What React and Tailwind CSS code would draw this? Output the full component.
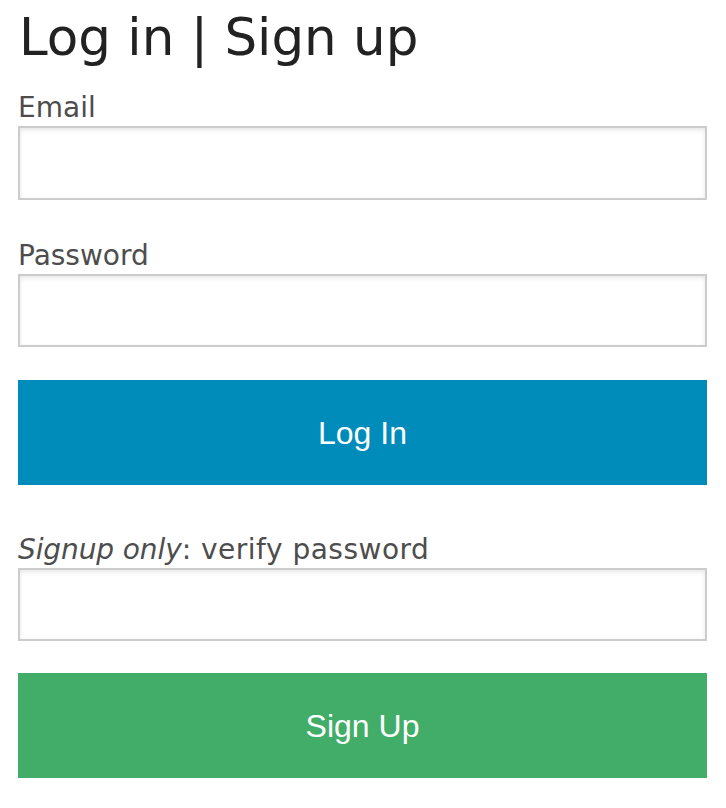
import React from "react";

const labelCls =
  "block text-[28px] leading-[36px] text-[#4d4d4d] font-['DejaVu_Sans',sans-serif]";
const inputCls =
  "block w-full h-[73px] border-2 border-[#cccccc] bg-white shadow-[inset_0_2px_4px_rgba(0,0,0,0.1)] outline-none";
const btnCls =
  "flex items-center justify-center w-full h-[105px] text-white text-[32px] font-['Liberation_Sans',Arial,sans-serif]";

export default function App() {
  return (
    <div className="w-[726px] h-[808px] bg-white pl-[18px] pr-[19px] pt-[7px] flex flex-col">
      <h1 className="text-[51.5px] leading-[60px] text-[#222222] font-['DejaVu_Sans',sans-serif] pl-[1px]">
        Log in | Sign up
      </h1>
      <label className={labelCls + " mt-[23px]"}>Email</label>
      <input type="email" className={inputCls + " h-[74px]"} />
      <label className={labelCls + " mt-[38px]"}>Password</label>
      <input type="password" className={inputCls} />
      <button className={btnCls + " mt-[33px] bg-[#008cba]"}>Log In</button>
      <label className={labelCls + " mt-[47px]"}>
        <em className="tracking-[-0.1px]">Signup only</em>
        <span className="tracking-[0.5px]">: verify password</span>
      </label>
      <input type="password" className={inputCls} />
      <button className={btnCls + " mt-[32px] bg-[#41ad69]"}>Sign Up</button>
    </div>
  );
}
